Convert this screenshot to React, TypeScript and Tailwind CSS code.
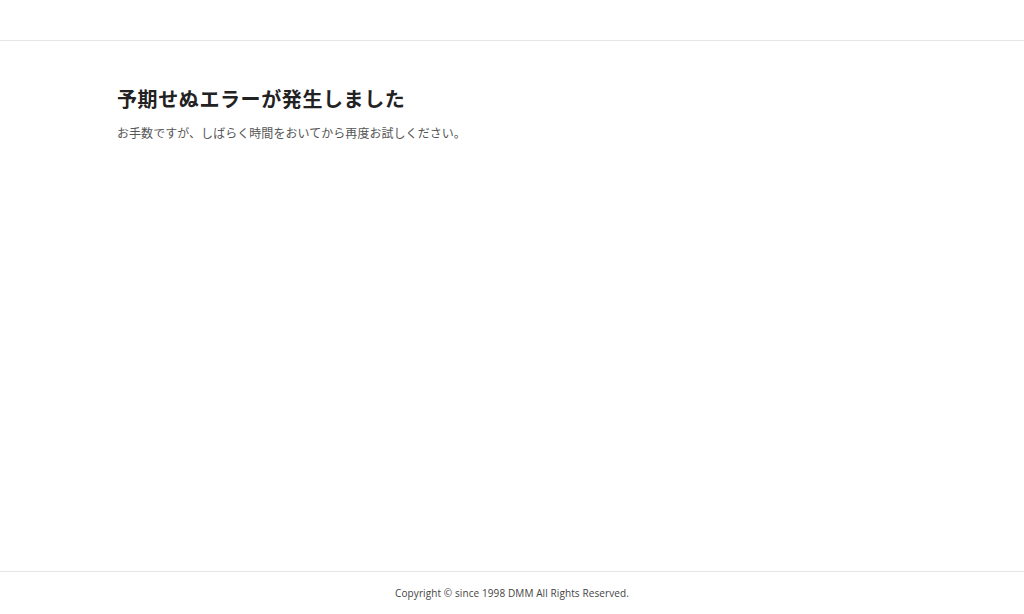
export default function App() {
  return (
    <div
      className="flex h-[614px] flex-col bg-white text-[#222]"
      style={{ fontFamily: '"Noto Sans CJK JP", "Noto Sans", sans-serif' }}
    >
      <header className="h-[41px] shrink-0 border-b border-[#e6e6e6]" />

      <main className="flex-1 px-[117px] pt-[43px]">
        <h1 className="text-[20px] font-bold leading-[30px] tracking-[0.6px] text-[#222]">
          予期せぬエラーが発生しました
        </h1>
        <p className="mt-[10px] text-[12px] leading-[18px] tracking-[0.05px] text-[#555]">
          お手数ですが、しばらく時間をおいてから再度お試しください。
        </p>
      </main>

      <footer className="flex h-[43px] shrink-0 items-center justify-center border-t border-[#e6e6e6]">
        <p
          className="text-[10px] tracking-[0.1px] text-[#444]"
          style={{ fontFamily: '"Open Sans", "Noto Sans", sans-serif' }}
        >
          Copyright © since 1998 DMM All Rights Reserved.
        </p>
      </footer>
    </div>
  );
}
